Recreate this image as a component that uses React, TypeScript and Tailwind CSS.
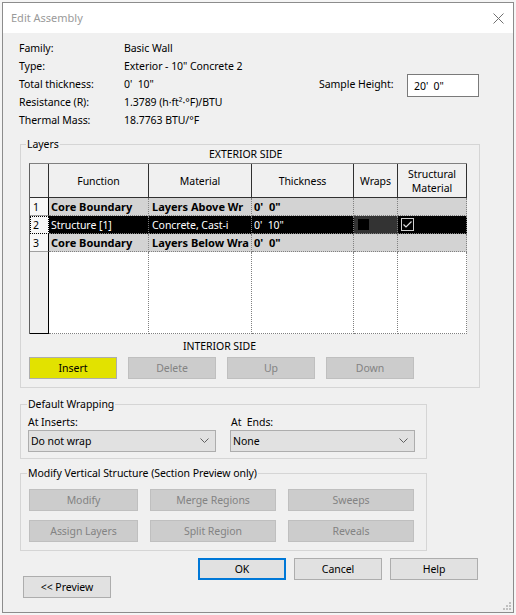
import React from "react";

function Btn({
  children,
  w,
  kind = "normal",
}: {
  children: React.ReactNode;
  w: string;
  kind?: "normal" | "disabled" | "ok" | "insert";
}) {
  let cls = "";
  if (kind === "normal") cls = "bg-[#e1e1e1] border border-[#adadad] text-black";
  if (kind === "disabled") cls = "bg-[#cccccc] border border-[#bfbfbf] text-[#838383]";
  if (kind === "ok") cls = "bg-[#e1e1e1] border-2 border-[#0078d7] text-black";
  if (kind === "insert") cls = "bg-[#e2e200] border border-[#adadad] text-black";
  return (
    <div className={`${w} h-[22px] flex items-center justify-center shrink-0 ${cls}`}>
      {children}
    </div>
  );
}

function Chevron() {
  return (
    <svg width="9" height="6" viewBox="0 0 9 6" className="shrink-0">
      <path d="M0.5 0.5 L4.5 4.5 L8.5 0.5" fill="none" stroke="#606060" strokeWidth="1" />
    </svg>
  );
}

function Select({ value, w }: { value: string; w: string }) {
  return (
    <div className={`${w} h-[22px] bg-[#e1e1e1] border border-[#adadad] flex items-center justify-between pl-[2px] pr-[6px]`}>
      <span>{value}</span>
      <Chevron />
    </div>
  );
}

const cols = "grid grid-cols-[19px_100px_103px_102px_44px_69px]";

function HeadCell({ children }: { children?: React.ReactNode }) {
  return (
    <div className="h-[34px] bg-[#f0f0f0] border-r border-b border-[#303030] flex items-center justify-center text-center leading-[14px]">
      {children}
    </div>
  );
}

function NumCell({ n, focus }: { n: string; focus?: boolean }) {
  return (
    <div
      className={
        focus
          ? "h-[18px] bg-[#f7f7f7] text-black font-normal text-[10.5px] border border-dotted border-black flex items-center pl-[2px] overflow-hidden"
          : "h-[18px] bg-[#f7f7f7] text-black font-normal text-[10.5px] border-r border-b border-r-black border-b-[#a0a0a0] flex items-center pl-[3px] overflow-hidden"
      }
    >
      {n}
    </div>
  );
}

function Cell({
  children,
  bg,
  pl = "pl-[2px]",
}: {
  children?: React.ReactNode;
  bg: string;
  pl?: string;
}) {
  return (
    <div
      className={`h-[18px] ${bg} ${pl} border-r border-b border-dotted border-[#808080] flex items-center whitespace-nowrap overflow-hidden`}
    >
      {children}
    </div>
  );
}

export default function App() {
  return (
    <div className="w-[516px] h-[615px] bg-[#f5f5f5] pt-[2px] pl-[2px] font-['Noto_Sans',sans-serif] text-[10.5px] tracking-[-0.05px] text-black leading-[14px]">
      <div className="relative w-[512px] h-[611px] border border-[#8c8c8c] bg-[#f0f0f0] flex flex-col">
        {/* Title bar */}
        <div className="h-[30px] bg-white flex items-center justify-between pl-[8px] pr-[9px] shrink-0">
          <span className="text-[11px] tracking-normal text-[#9a9a9a]">Edit Assembly</span>
          <svg width="11" height="11" viewBox="0 0 11 11">
            <path d="M0.5 0.5 L10.5 10.5 M10.5 0.5 L0.5 10.5" stroke="#707070" strokeWidth="1" fill="none" />
          </svg>
        </div>

        {/* Body */}
        <div className="flex flex-col pl-[16px] pt-[6px]">
          {/* Info */}
          <div className="flex flex-col">
            <div className="h-[18px] flex items-center">
              <span className="w-[105px]">Family:</span>
              <span>Basic Wall</span>
            </div>
            <div className="h-[18px] flex items-center">
              <span className="w-[105px]">Type:</span>
              <span>Exterior - 10" Concrete 2</span>
            </div>
            <div className="h-[18px] flex items-center">
              <span className="w-[105px] shrink-0">Total thickness:</span>
              <span className="w-[195px] shrink-0">0'&nbsp; 10"</span>
              <span className="w-[88px] shrink-0">Sample Height:</span>
              <div className="self-start mt-[-1px] mb-[-4px] w-[72px] h-[23px] bg-white border border-[#7a7a7a] flex items-center pl-[6px]">
                20'&nbsp; 0"
              </div>
            </div>
            <div className="h-[18px] flex items-center">
              <span className="w-[105px]">Resistance (R):</span>
              <span>1.3789 (h·ft²·°F)/BTU</span>
            </div>
            <div className="h-[18px] flex items-center">
              <span className="w-[105px]">Thermal Mass:</span>
              <span>18.7763 BTU/°F</span>
            </div>
          </div>

          {/* Layers group */}
          <fieldset className="ml-[1px] mt-[8px] w-[460px] border border-[#d5d5d5] pl-[8px] pb-[8px]">
            <legend className="ml-[-3px] px-[1px] leading-[14px]">Layers</legend>
            <div className="mt-[-3px] h-[12px] leading-[12px] ml-[180px]">EXTERIOR SIDE</div>
            <div className="mt-[3px] w-[438px] border-t border-l border-t-[#808080] border-l-[#606060]">
              {/* header */}
              <div className={cols}>
                <HeadCell />
                <HeadCell>Function</HeadCell>
                <HeadCell>Material</HeadCell>
                <HeadCell>Thickness</HeadCell>
                <HeadCell>Wraps</HeadCell>
                <HeadCell>
                  Structural
                  <br />
                  Material
                </HeadCell>
              </div>
              {/* row 1 */}
              <div className={`${cols} font-bold text-[11px] tracking-normal`}>
                <NumCell n="1" />
                <Cell bg="bg-[#d3d3d3]">Core Boundary</Cell>
                <Cell bg="bg-[#d3d3d3]" pl="pl-[3px]">Layers Above Wr</Cell>
                <Cell bg="bg-[#d3d3d3]">0'&nbsp; 0"</Cell>
                <Cell bg="bg-[#d3d3d3]" />
                <Cell bg="bg-[#d3d3d3]" />
              </div>
              {/* row 2 */}
              <div className={`${cols} text-white`}>
                <NumCell n="2" focus />
                <Cell bg="bg-black">Structure [1]</Cell>
                <Cell bg="bg-black" pl="pl-[3px]">Concrete, Cast-i</Cell>
                <Cell bg="bg-black">0'&nbsp; 10"</Cell>
                <Cell bg="bg-[#333333]" pl="pl-[4px]">
                  <div className="w-[11px] h-[11px] bg-black" />
                </Cell>
                <Cell bg="bg-black" pl="pl-[3px]">
                  <svg width="13" height="13" viewBox="0 0 13 13">
                    <rect x="0.5" y="0.5" width="12" height="12" fill="none" stroke="#d0d0d0" strokeWidth="1" />
                    <path d="M2.5 6.5 L5 9 L10.5 3.5" fill="none" stroke="#e0e0e0" strokeWidth="1.2" />
                  </svg>
                </Cell>
              </div>
              {/* row 3 */}
              <div className={`${cols} font-bold text-[11px] tracking-normal`}>
                <NumCell n="3" />
                <Cell bg="bg-[#d3d3d3]">Core Boundary</Cell>
                <Cell bg="bg-[#d3d3d3]" pl="pl-[3px]">Layers Below Wra</Cell>
                <Cell bg="bg-[#d3d3d3]">0'&nbsp; 0"</Cell>
                <Cell bg="bg-[#d3d3d3]" />
                <Cell bg="bg-[#d3d3d3]" />
              </div>
              {/* empty */}
              <div className={cols}>
                <div className="h-[82px] bg-[#f0f0f0] border-r border-b border-black" />
                <div className="h-[82px] bg-white border-r border-b border-dotted border-[#808080]" />
                <div className="h-[82px] bg-white border-r border-b border-dotted border-[#808080]" />
                <div className="h-[82px] bg-white border-r border-b border-dotted border-[#808080]" />
                <div className="h-[82px] bg-white border-r border-b border-dotted border-[#808080]" />
                <div className="h-[82px] bg-white border-r border-b border-dotted border-[#808080]" />
              </div>
            </div>
            <div className="mt-[5px] ml-[154px] leading-[14px]">INTERIOR SIDE</div>
            <div className="mt-[4px] flex gap-[11px]">
              <Btn w="w-[88px]" kind="insert">Insert</Btn>
              <Btn w="w-[88px]" kind="disabled">Delete</Btn>
              <Btn w="w-[88px]" kind="disabled">Up</Btn>
              <Btn w="w-[88px]" kind="disabled">Down</Btn>
            </div>
          </fieldset>

          {/* Default Wrapping */}
          <fieldset className="ml-[1px] mt-[9px] w-[407px] border border-[#d5d5d5] pl-[7px] pt-[4px] pb-[6px]">
            <legend className="ml-[-1px] px-[1px] leading-[14px]">Default Wrapping</legend>
            <div className="flex gap-[14px]">
              <div className="flex flex-col">
                <span className="leading-[14px]">At Inserts:</span>
                <div className="mt-[1px]">
                  <Select value="Do not wrap" w="w-[188px]" />
                </div>
              </div>
              <div className="flex flex-col">
                <span className="leading-[14px] pl-[1px]">At&nbsp; Ends:</span>
                <div className="mt-[1px]">
                  <Select value="None" w="w-[185px]" />
                </div>
              </div>
            </div>
          </fieldset>

          {/* Modify Vertical Structure */}
          <fieldset className="ml-[1px] mt-[7px] w-[407px] border border-[#d5d5d5] pl-[8px] pt-[9px] pb-[8px]">
            <legend className="ml-[-2px] px-[1px] leading-[14px]">Modify Vertical Structure (Section Preview only)</legend>
            <div className="flex flex-col gap-[9px]">
              <div className="flex gap-[12px]">
                <Btn w="w-[109px]" kind="disabled">Modify</Btn>
                <Btn w="w-[126px]" kind="disabled">Merge Regions</Btn>
                <Btn w="w-[126px]" kind="disabled">Sweeps</Btn>
              </div>
              <div className="flex gap-[12px]">
                <Btn w="w-[109px]" kind="disabled">Assign Layers</Btn>
                <Btn w="w-[126px]" kind="disabled">Split Region</Btn>
                <Btn w="w-[126px]" kind="disabled">Reveals</Btn>
              </div>
            </div>
          </fieldset>

          {/* Bottom buttons */}
          <div className="mt-[7px] flex items-start">
            <div className="mt-[18px] ml-[4px]">
              <Btn w="w-[88px]">&lt;&lt; Preview</Btn>
            </div>
            <div className="ml-[87px] flex gap-[8px]">
              <Btn w="w-[88px]" kind="ok">OK</Btn>
              <Btn w="w-[88px]">Cancel</Btn>
              <Btn w="w-[88px]">Help</Btn>
            </div>
          </div>
        </div>

        {/* resize grip */}
        <svg className="absolute right-[2px] bottom-[2px]" width="8" height="8" viewBox="0 0 8 8">
          <rect x="6" y="0" width="2" height="2" fill="#c0c0c0" />
          <rect x="3" y="3" width="2" height="2" fill="#c0c0c0" />
          <rect x="6" y="3" width="2" height="2" fill="#c0c0c0" />
          <rect x="0" y="6" width="2" height="2" fill="#c0c0c0" />
          <rect x="3" y="6" width="2" height="2" fill="#c0c0c0" />
          <rect x="6" y="6" width="2" height="2" fill="#c0c0c0" />
        </svg>
      </div>
    </div>
  );
}
